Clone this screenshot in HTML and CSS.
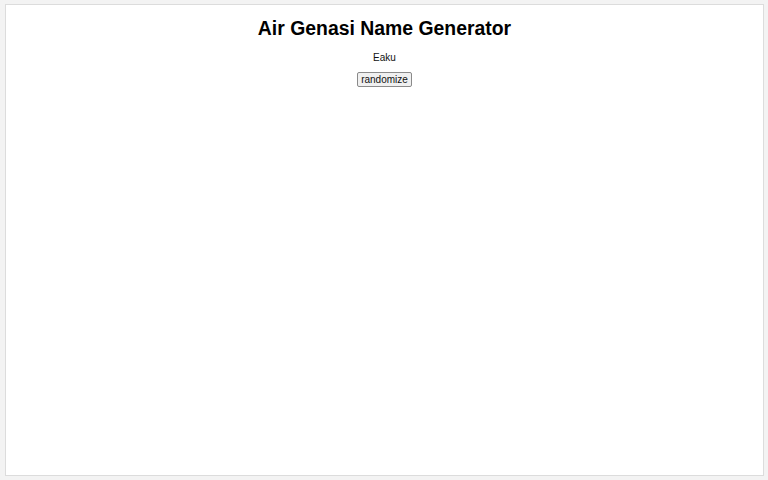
FILE: index.html
```html
<!DOCTYPE html>
<html>
<head>
<meta charset="utf-8">
<title>Air Genasi Name Generator</title>
<link rel="stylesheet" href="styles.css">
</head>
<body>
<main class="panel">
  <h1 class="title">Air Genasi Name Generator</h1>
  <p class="name">Eaku</p>
  <button class="randomize" type="button">randomize</button>
</main>
</body>
</html>
```
FILE: styles.css
```css
html, body {
  margin: 0;
  height: 100%;
}
body {
  background: #f3f3f3;
  font-family: "Liberation Sans", Arial, sans-serif;
  padding: 4px 4px 4px 5px;
  box-sizing: border-box;
}
.panel {
  background: #fff;
  border: 1px solid #dcdcdc;
  height: 100%;
  box-sizing: border-box;
  display: flex;
  flex-direction: column;
  align-items: center;
}
.title {
  margin: 12px 0 0;
  font-size: 19.4px;
  font-weight: bold;
  color: #000;
  line-height: 23px;
}
.name {
  margin: 12px 0 0;
  font-size: 10px;
  line-height: 12px;
  color: #111;
}
.randomize {
  margin-top: 8px;
  font-family: "Liberation Sans", Arial, sans-serif;
  font-size: 10px;
  padding: 1px 3.5px;
  border: 1px solid #8a8a8a;
  border-radius: 2px;
  background: #f0f0f0;
  color: #111;
}
```
